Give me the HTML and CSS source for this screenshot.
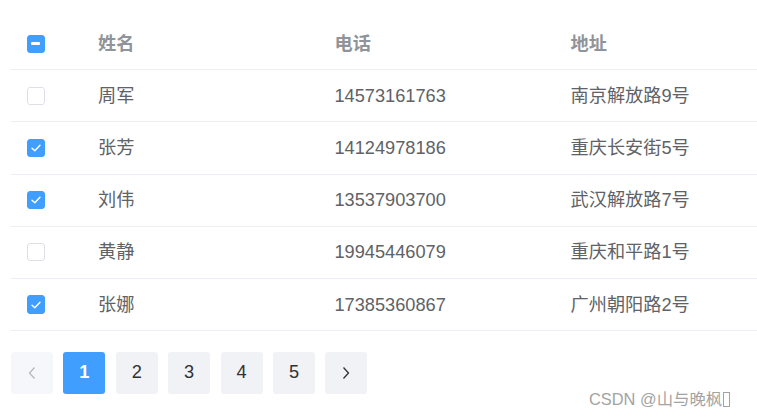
FILE: index.html
```html
<!DOCTYPE html>
<html lang="zh-CN">
<head>
<meta charset="utf-8">
<title>Table</title>
<link rel="stylesheet" href="styles.css">
</head>
<body>
<div class="page">
  <div class="table">
    <div class="row head">
      <div class="cell sel"><span class="cb indeterminate"><span class="bar"></span></span></div>
      <div class="cell">姓名</div>
      <div class="cell">电话</div>
      <div class="cell">地址</div>
    </div>
    <div class="row">
      <div class="cell sel"><span class="cb"></span></div>
      <div class="cell">周军</div>
      <div class="cell">14573161763</div>
      <div class="cell">南京解放路9号</div>
    </div>
    <div class="row">
      <div class="cell sel"><span class="cb checked"><svg viewBox="0 0 18 18" width="18" height="18"><path d="M5 9.2 L7.8 11.8 L13 6.3" fill="none" stroke="#fff" stroke-width="1.4" stroke-linecap="round" stroke-linejoin="round"/></svg></span></div>
      <div class="cell">张芳</div>
      <div class="cell">14124978186</div>
      <div class="cell">重庆长安街5号</div>
    </div>
    <div class="row">
      <div class="cell sel"><span class="cb checked"><svg viewBox="0 0 18 18" width="18" height="18"><path d="M5 9.2 L7.8 11.8 L13 6.3" fill="none" stroke="#fff" stroke-width="1.4" stroke-linecap="round" stroke-linejoin="round"/></svg></span></div>
      <div class="cell">刘伟</div>
      <div class="cell">13537903700</div>
      <div class="cell">武汉解放路7号</div>
    </div>
    <div class="row">
      <div class="cell sel"><span class="cb"></span></div>
      <div class="cell">黄静</div>
      <div class="cell">19945446079</div>
      <div class="cell">重庆和平路1号</div>
    </div>
    <div class="row">
      <div class="cell sel"><span class="cb checked"><svg viewBox="0 0 18 18" width="18" height="18"><path d="M5 9.2 L7.8 11.8 L13 6.3" fill="none" stroke="#fff" stroke-width="1.4" stroke-linecap="round" stroke-linejoin="round"/></svg></span></div>
      <div class="cell">张娜</div>
      <div class="cell">17385360867</div>
      <div class="cell">广州朝阳路2号</div>
    </div>
  </div>
  <div class="pager">
    <button class="pbtn disabled"><svg viewBox="0 0 12 16" width="12" height="16"><path d="M8.5 2.5 L3.5 8 L8.5 13.5" fill="none" stroke="currentColor" stroke-width="1.3"/></svg></button>
    <button class="pbtn active">1</button>
    <button class="pbtn">2</button>
    <button class="pbtn">3</button>
    <button class="pbtn">4</button>
    <button class="pbtn">5</button>
    <button class="pbtn"><svg viewBox="0 0 12 16" width="12" height="16"><path d="M3.5 2.5 L8.5 8 L3.5 13.5" fill="none" stroke="currentColor" stroke-width="1.3"/></svg></button>
  </div>
  <div class="watermark">CSDN @山与晚枫<span class="tofu"></span></div>
</div>
</body>
</html>
```
FILE: styles.css
```css
html, body {
  margin: 0;
  padding: 0;
  background: #fff;
}
.page {
  position: relative;
  width: 757px;
  height: 417px;
  padding: 18px 0 0 11px;
  box-sizing: border-box;
  font-family: "Liberation Sans", "Noto Sans CJK SC", sans-serif;
  overflow: hidden;
}
.table {
  width: 746px;
}
.row {
  display: grid;
  grid-template-columns: 71.5px 236.5px 236px 1fr;
  height: 52.2px;
  box-sizing: border-box;
  border-bottom: 1px solid #ebeef5;
  align-items: center;
  font-size: 18.2px;
  color: #606266;
}
.row.head {
  color: #909399;
  font-weight: bold;
}
.cell {
  padding: 0 15.5px;
  white-space: nowrap;
  line-height: 30px;
}
.cell.sel {
  display: flex;
  align-items: center;
}
.cb {
  width: 18.2px;
  height: 18.2px;
  box-sizing: border-box;
  border: 1px solid #dcdfe6;
  border-radius: 3px;
  background: #fff;
  display: flex;
  align-items: center;
  justify-content: center;
}
.cb.checked, .cb.indeterminate {
  background: #409eff;
  border-color: #409eff;
}
.cb svg {
  display: block;
  flex: none;
}
.cb .bar {
  width: 8.5px;
  height: 2.4px;
  background: #fff;
  border-radius: 1px;
}
.pager {
  display: flex;
  gap: 10.4px;
  margin-top: 21px;
}
.pbtn {
  width: 42px;
  height: 41.6px;
  border: none;
  border-radius: 3px;
  background: #f0f2f5;
  color: #303133;
  font-family: "Liberation Sans", "Noto Sans CJK SC", sans-serif;
  font-size: 18.2px;
  padding: 0;
  display: flex;
  align-items: center;
  justify-content: center;
}
.pbtn.disabled {
  background: #f5f7fa;
  color: #b5b8bf;
}
.pbtn.active {
  background: #409eff;
  color: #fff;
  font-weight: bold;
}
.watermark {
  position: absolute;
  left: 589px;
  top: 389px;
  font-size: 16.4px;
  line-height: 20px;
  color: #a3a3a3;
  display: flex;
  align-items: center;
  white-space: nowrap;
}
.tofu {
  display: inline-block;
  width: 5px;
  height: 13px;
  border: 1px solid #a3a3a3;
  margin-left: 1px;
}
```
